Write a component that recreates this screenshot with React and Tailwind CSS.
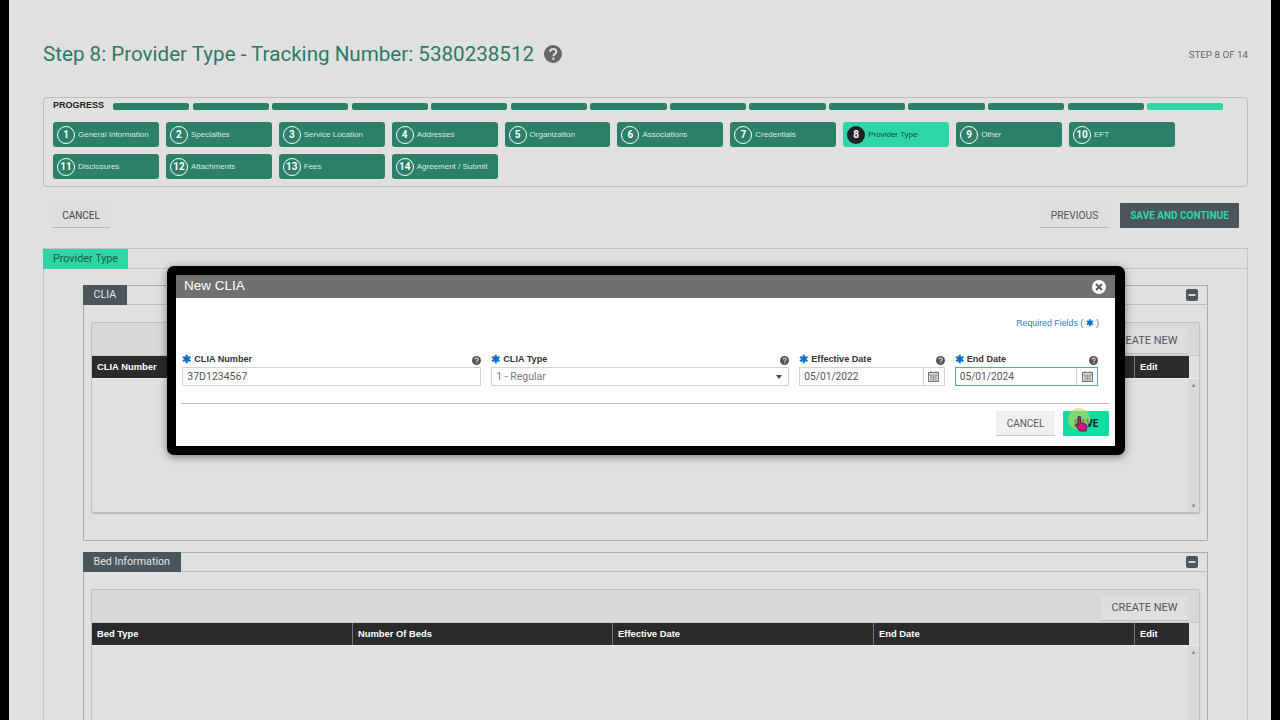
import { Minus } from 'lucide-react'

const STEPS = [
    'General Information', 'Specialties', 'Service Location', 'Addresses', 'Organization',
    'Associations', 'Credentials', 'Provider Type', 'Other', 'EFT',
    'Disclosures', 'Attachments', 'Fees', 'Agreement / Submit',
]

const BED_COLS = [
    { label: 'Bed Type', w: 'w-[261px]' },
    { label: 'Number Of Beds', w: 'w-[260px]' },
    { label: 'Effective Date', w: 'w-[261px]' },
    { label: 'End Date', w: 'w-[261px]' },
    { label: 'Edit', w: 'flex-1' },
]

const CLIA_COLS = [
    { label: 'CLIA Number', w: 'w-[261px]' },
    { label: '', w: 'w-[260px]' },
    { label: '', w: 'w-[261px]' },
    { label: '', w: 'w-[261px]' },
    { label: 'Edit', w: 'flex-1' },
]

function HelpIcon({ size = 9, color = '#555' }) {
    return (
        <svg width={size} height={size} viewBox="0 0 20 20" className="shrink-0">
            <circle cx="10" cy="10" r="10" fill={color} />
            <path d="M6.6 7.6C6.8 5.6 8.2 4.5 10.2 4.5c2 0 3.4 1.2 3.4 2.9 0 1.4-.8 2.1-1.8 2.8-.8.6-1.1 1-1.1 1.8v.4" fill="none" stroke="#e0e0e0" strokeWidth="2.3" />
            <rect x="9.2" y="14" width="2.4" height="2.4" fill="#e0e0e0" />
        </svg>
    )
}

function CalendarIcon() {
    return (
        <svg width="11" height="11" viewBox="0 0 11 11" fill="none" stroke="#777" strokeWidth="1">
            <rect x="0.5" y="1.5" width="10" height="9" fill="#ddd" />
            <path d="M0.5 4h10M3 6h5M3 8h5M3 4v6M5.5 4v6M8 4v6" strokeWidth="0.6" />
            <path d="M3 0v2M8 0v2" />
        </svg>
    )
}

function Star() {
    return <span className="text-[#0b6fc2] text-[11px] font-bold leading-none mr-[3px]">✱</span>
}

function Field({ label, className, children }) {
    return (
        <div className={className}>
            <div className="flex items-center justify-between h-[14px]">
                <span className="flex items-center text-[9.1px] font-bold text-[#333] font-['Liberation_Sans',sans-serif]"><Star />{label}</span>
                <HelpIcon />
            </div>
            {children}
        </div>
    )
}

function DateInput({ value, focused }) {
    return (
        <div className={`flex h-[19px] bg-white ${focused ? 'border-[1.5px] border-[#5ba3c4]' : 'border border-[#d4d4d4]'}`}>
            <span className="flex-1 pl-[4px] text-[10.2px] leading-[18px] text-[#555]">{value}</span>
            <span className="w-[21px] border-l border-[#d4d4d4] flex items-center justify-center"><CalendarIcon /></span>
        </div>
    )
}

function StepButton({ n, label }) {
    const active = n === 8
    return (
        <div className={`w-[105.9px] h-[25px] rounded-[3px] flex items-center pl-[4px] ${active ? 'bg-[#2ed6a5] text-[#14513f]' : 'bg-[#2b8067] text-[#d8e8e2]'}`}>
            <span className={`w-[18px] h-[18px] rounded-full flex items-center justify-center text-[10px] font-bold shrink-0 ${active ? 'bg-[#222] text-white text-[8px]' : 'border-[1.5px] border-white text-white'}`}>{n}</span>
            <span className="ml-[3px] text-[8px] whitespace-nowrap font-['Liberation_Sans',sans-serif]">{label}</span>
        </div>
    )
}

function PanelHeader({ title }) {
    return (
        <div className="flex items-center justify-between h-[20px] border border-b-[#bdbdbd] border-[#aaa] border-l-0">
            <div className="h-[20px] -mt-px px-[10.5px] bg-[#4a565c] text-[#e4e4e4] text-[10.7px] leading-[20px]">{title}</div>
            <span className="w-[12px] h-[12px] mr-[9px] rounded-[2px] bg-[#4a565c] flex items-center justify-center">
                <Minus size={10} strokeWidth={4} color="#fff" />
            </span>
        </div>
    )
}

function GridBox({ cols, downArrow }) {
    return (
        <div className="mx-[7px] mt-[17px] h-[191px] flex flex-col border border-[#c0c0c0] rounded-[2px] shadow-[0_1px_1px_#bbb]">
            <div className="h-[33px] shrink-0 bg-[#d8d8d8] flex justify-end border-b border-[#c8c8c8] pr-[11px] pt-[6px]">
                <button className="w-[87px] h-[25px] bg-[#dedede] text-[#555] text-[11px] border-b border-[#bbb]">CREATE NEW</button>
            </div>
            <div className="flex h-[22px] shrink-0 w-[1097px] bg-[#2b2b2b] text-white text-[9.4px] font-bold leading-[22px] font-['Liberation_Sans',sans-serif]">
                {cols.map((c, i) => (
                    <div key={i} className={`${c.w} pl-[5px] ${i < cols.length - 1 ? 'border-r border-[#777]' : ''}`}>{c.label}</div>
                ))}
            </div>
            <div className="flex-1 flex justify-end min-h-0 border-t border-[#ececec]">
                <div className="w-[11px] bg-[#d9d9d9] flex flex-col items-center justify-between py-[3px] text-[6px] text-[#888] leading-none">
                    <span>▲</span>
                    {downArrow && <span>▼</span>}
                </div>
            </div>
        </div>
    )
}

export default function App() {
    return (
        <div className="relative w-[1280px] h-[720px] overflow-hidden bg-black px-[9px] font-['Roboto','Liberation_Sans',sans-serif]">
            <div className="w-[1262px] h-[720px] overflow-hidden bg-[#e0e0e0] pl-[34px] pt-[41px]">
                {/* Title */}
                <div className="flex items-center justify-between h-[26px] w-[1205px]">
                    <div className="flex items-center gap-[10px]">
                        <h1 className="text-[20.6px] leading-[26px] text-[#2c7a64]">Step 8: Provider Type - Tracking Number: 5380238512</h1>
                        <HelpIcon size={18} color="#666" />
                    </div>
                    <span className="text-[9.8px] text-[#666] pt-[2px]">STEP 8 OF 14</span>
                </div>

                {/* Progress */}
                <div className="mt-[30px] w-[1205px] h-[90px] border border-[#bdbdbd] rounded-[4px] pl-[9px] pt-[4px]">
                    <div className="flex items-center h-[8px]">
                        <span className="w-[60px] text-[9px] font-bold text-[#222] font-['Liberation_Sans',sans-serif]">PROGRESS</span>
                        <div className="flex gap-[3.3px]">
                            {STEPS.map((s, i) => (
                                <span key={s} className={`w-[76.26px] h-[7px] rounded-[2px] ${i === 13 ? 'bg-[#2ed6a5]' : 'bg-[#2b8067]'}`} />
                            ))}
                        </div>
                    </div>
                    <div className="mt-[12px] flex flex-wrap gap-x-[7px] gap-y-[7px]">
                        {STEPS.map((s, i) => <StepButton key={s} n={i + 1} label={s} />)}
                    </div>
                </div>

                {/* Actions */}
                <div className="mt-[16px] w-[1205px] flex items-center justify-between pl-[9px] pr-[9px] h-[25px]">
                    <button className="w-[58px] h-[25px] bg-[#dedede] text-[#444] text-[10px] border-b border-[#bbb]">CANCEL</button>
                    <div className="flex gap-[11px]">
                        <button className="w-[69px] h-[25px] pt-[1px] bg-[#dedede] text-[#555] text-[10.2px] border-b border-[#bbb]">PREVIOUS</button>
                        <button className="w-[119px] h-[25px] bg-[#4a565c] text-[#2ed6a5] text-[10px] font-bold rounded-[1px]">SAVE AND CONTINUE</button>
                    </div>
                </div>

                {/* Provider Type section */}
                <div className="mt-[20px] w-[1205px] h-[600px] border border-[#c4c4c4]">
                    <div className="h-[20px] border-b border-[#c4c4c4]">
                        <div className="w-[85px] h-[20px] -ml-px bg-[#2ed6a5] text-[#26584a] text-[10.8px] leading-[20px] text-center">Provider Type</div>
                    </div>
                    <div className="mx-[39px] mt-[16px]">
                        <div className="h-[256px] border-l border-r border-b border-[#aaa] rounded-b-[2px]">
                            <div className="-ml-px -mr-px"><PanelHeader title="CLIA" /></div>
                            <GridBox cols={CLIA_COLS} downArrow />
                        </div>
                        <div className="mt-[11px] border-l border-r border-[#aaa]">
                            <div className="-ml-px -mr-px"><PanelHeader title="Bed Information" /></div>
                            <GridBox cols={BED_COLS} />
                        </div>
                    </div>
                </div>
            </div>

            {/* Modal */}
            <div className="absolute left-[167px] top-[266px] w-[958px] h-[189px] border-[9px] border-r-[10px] border-black rounded-[7px] bg-white shadow-[0_2px_8px_rgba(0,0,0,0.45)]">
                <div className="h-[23px] bg-[#707070] flex items-center justify-between pl-[8px] pr-[9px]">
                    <span className="text-[13.5px] text-white font-['Liberation_Sans',sans-serif] -mt-[1px]">New CLIA</span>
                    <span className="w-[14px] h-[14px] rounded-full bg-white flex items-center justify-center">
                        <svg width="8" height="8" viewBox="0 0 8 8" stroke="#555" strokeWidth="1.8"><path d="M1 1l6 6M7 1L1 7" /></svg>
                    </span>
                </div>
                <div className="px-[6px]">
                    <div className="h-[55px] pt-[20px] pr-[10px] text-right text-[8.8px] leading-[11px] text-[#2f7fb8] font-['Liberation_Sans',sans-serif]">Required Fields ( <span className="text-[#0b6fc2] font-bold">✱</span> )</div>
                    <div className="flex gap-[10px] pl-[0.3px]">
                        <Field label="CLIA Number" className="w-[299px]">
                            <div className="h-[19px] border border-[#d4d4d4] pl-[4px] text-[10.5px] leading-[17px] text-[#555]">37D1234567</div>
                        </Field>
                        <Field label="CLIA Type" className="w-[298px]">
                            <div className="h-[19px] border border-[#d4d4d4] pl-[4px] pr-[6px] flex items-center justify-between text-[10.5px] text-[#777]">
                                <span>1 - Regular</span>
                                <span className="w-0 h-0 border-l-[3.5px] border-r-[3.5px] border-t-[4px] border-l-transparent border-r-transparent border-t-[#444]" />
                            </div>
                        </Field>
                        <Field label="Effective Date" className="w-[145.4px]">
                            <DateInput value="05/01/2022" />
                        </Field>
                        <Field label="End Date" className="w-[143.6px]">
                            <DateInput value="05/01/2024" focused />
                        </Field>
                    </div>
                    <div className="mt-[17px] border-t border-[#bbb]" />
                    <div className="flex justify-end gap-[8px] pt-[7px]">
                        <button className="w-[59px] h-[25px] bg-[#f0f0f0] text-[#555] text-[10px] border-b border-[#ccc]">CANCEL</button>
                        <button className="relative w-[46px] h-[25px] bg-[#14dca0] text-[#123] text-[10px] font-bold rounded-[1px]">
                            SAVE
                            <span className="absolute left-[5px] top-[-3px] w-[22px] h-[22px] rounded-full bg-[#c8d25a]/60" />
                            <svg className="absolute left-[12px] top-[5px]" width="13" height="17" viewBox="0 0 13 17">
                                <path d="M3 1.5a1.3 1.3 0 0 1 2.6 0V7l5 1.3c1 .3 1.6 1 1.4 2L11 15H4.5L.8 9.6c-.7-1 .6-2.2 1.5-1.2L3 9.2z" fill="#d6118c" stroke="#222" strokeWidth="0.8" />
                            </svg>
                        </button>
                    </div>
                </div>
            </div>
        </div>
    )
}
